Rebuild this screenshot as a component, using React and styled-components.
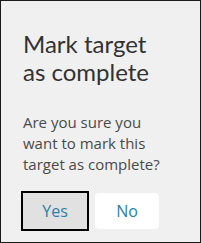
import React from "react";
import styled, { createGlobalStyle } from "styled-components";

const GlobalStyle = createGlobalStyle`
  html, body {
    margin: 0;
    padding: 0;
  }
  * {
    box-sizing: border-box;
  }
`;

const Dialog = styled.div`
  width: 201px;
  height: 243px;
  border: 1px solid #1a1a1a;
  background: #f0f0f0;
  padding: 29px 27px 0 22px;
  display: flex;
  flex-direction: column;
`;

const Title = styled.h2`
  margin: 0;
  font-family: Lato, "Open Sans", sans-serif;
  font-weight: 400;
  font-size: 24px;
  line-height: 28px;
  color: #323232;
`;

const Message = styled.p`
  margin: 26px 0 0;
  font-family: "Open Sans", sans-serif;
  font-size: 15px;
  line-height: 21px;
  color: #4a4a4a;
`;

const Actions = styled.div`
  display: flex;
  gap: 8px;
  margin-top: 18px;
`;

const Button = styled.button`
  width: 64px;
  height: 36px;
  flex: none;
  border: 0;
  padding: 0;
  font-family: "Open Sans", sans-serif;
  font-size: 16px;
  color: #2b7fa8;
  cursor: pointer;
  background: ${(p) => (p.$focused ? "#e1e1e1" : "#ffffff")};
  outline: ${(p) => (p.$focused ? "2px solid #000" : "none")};
  border-radius: ${(p) => (p.$focused ? "0" : "4px")};
`;

export default function App() {
  return (
    <>
      <GlobalStyle />
      <Dialog>
        <Title>Mark target as complete</Title>
        <Message>Are you sure you want to mark this target as complete?</Message>
        <Actions>
          <Button $focused>Yes</Button>
          <Button>No</Button>
        </Actions>
      </Dialog>
    </>
  );
}
